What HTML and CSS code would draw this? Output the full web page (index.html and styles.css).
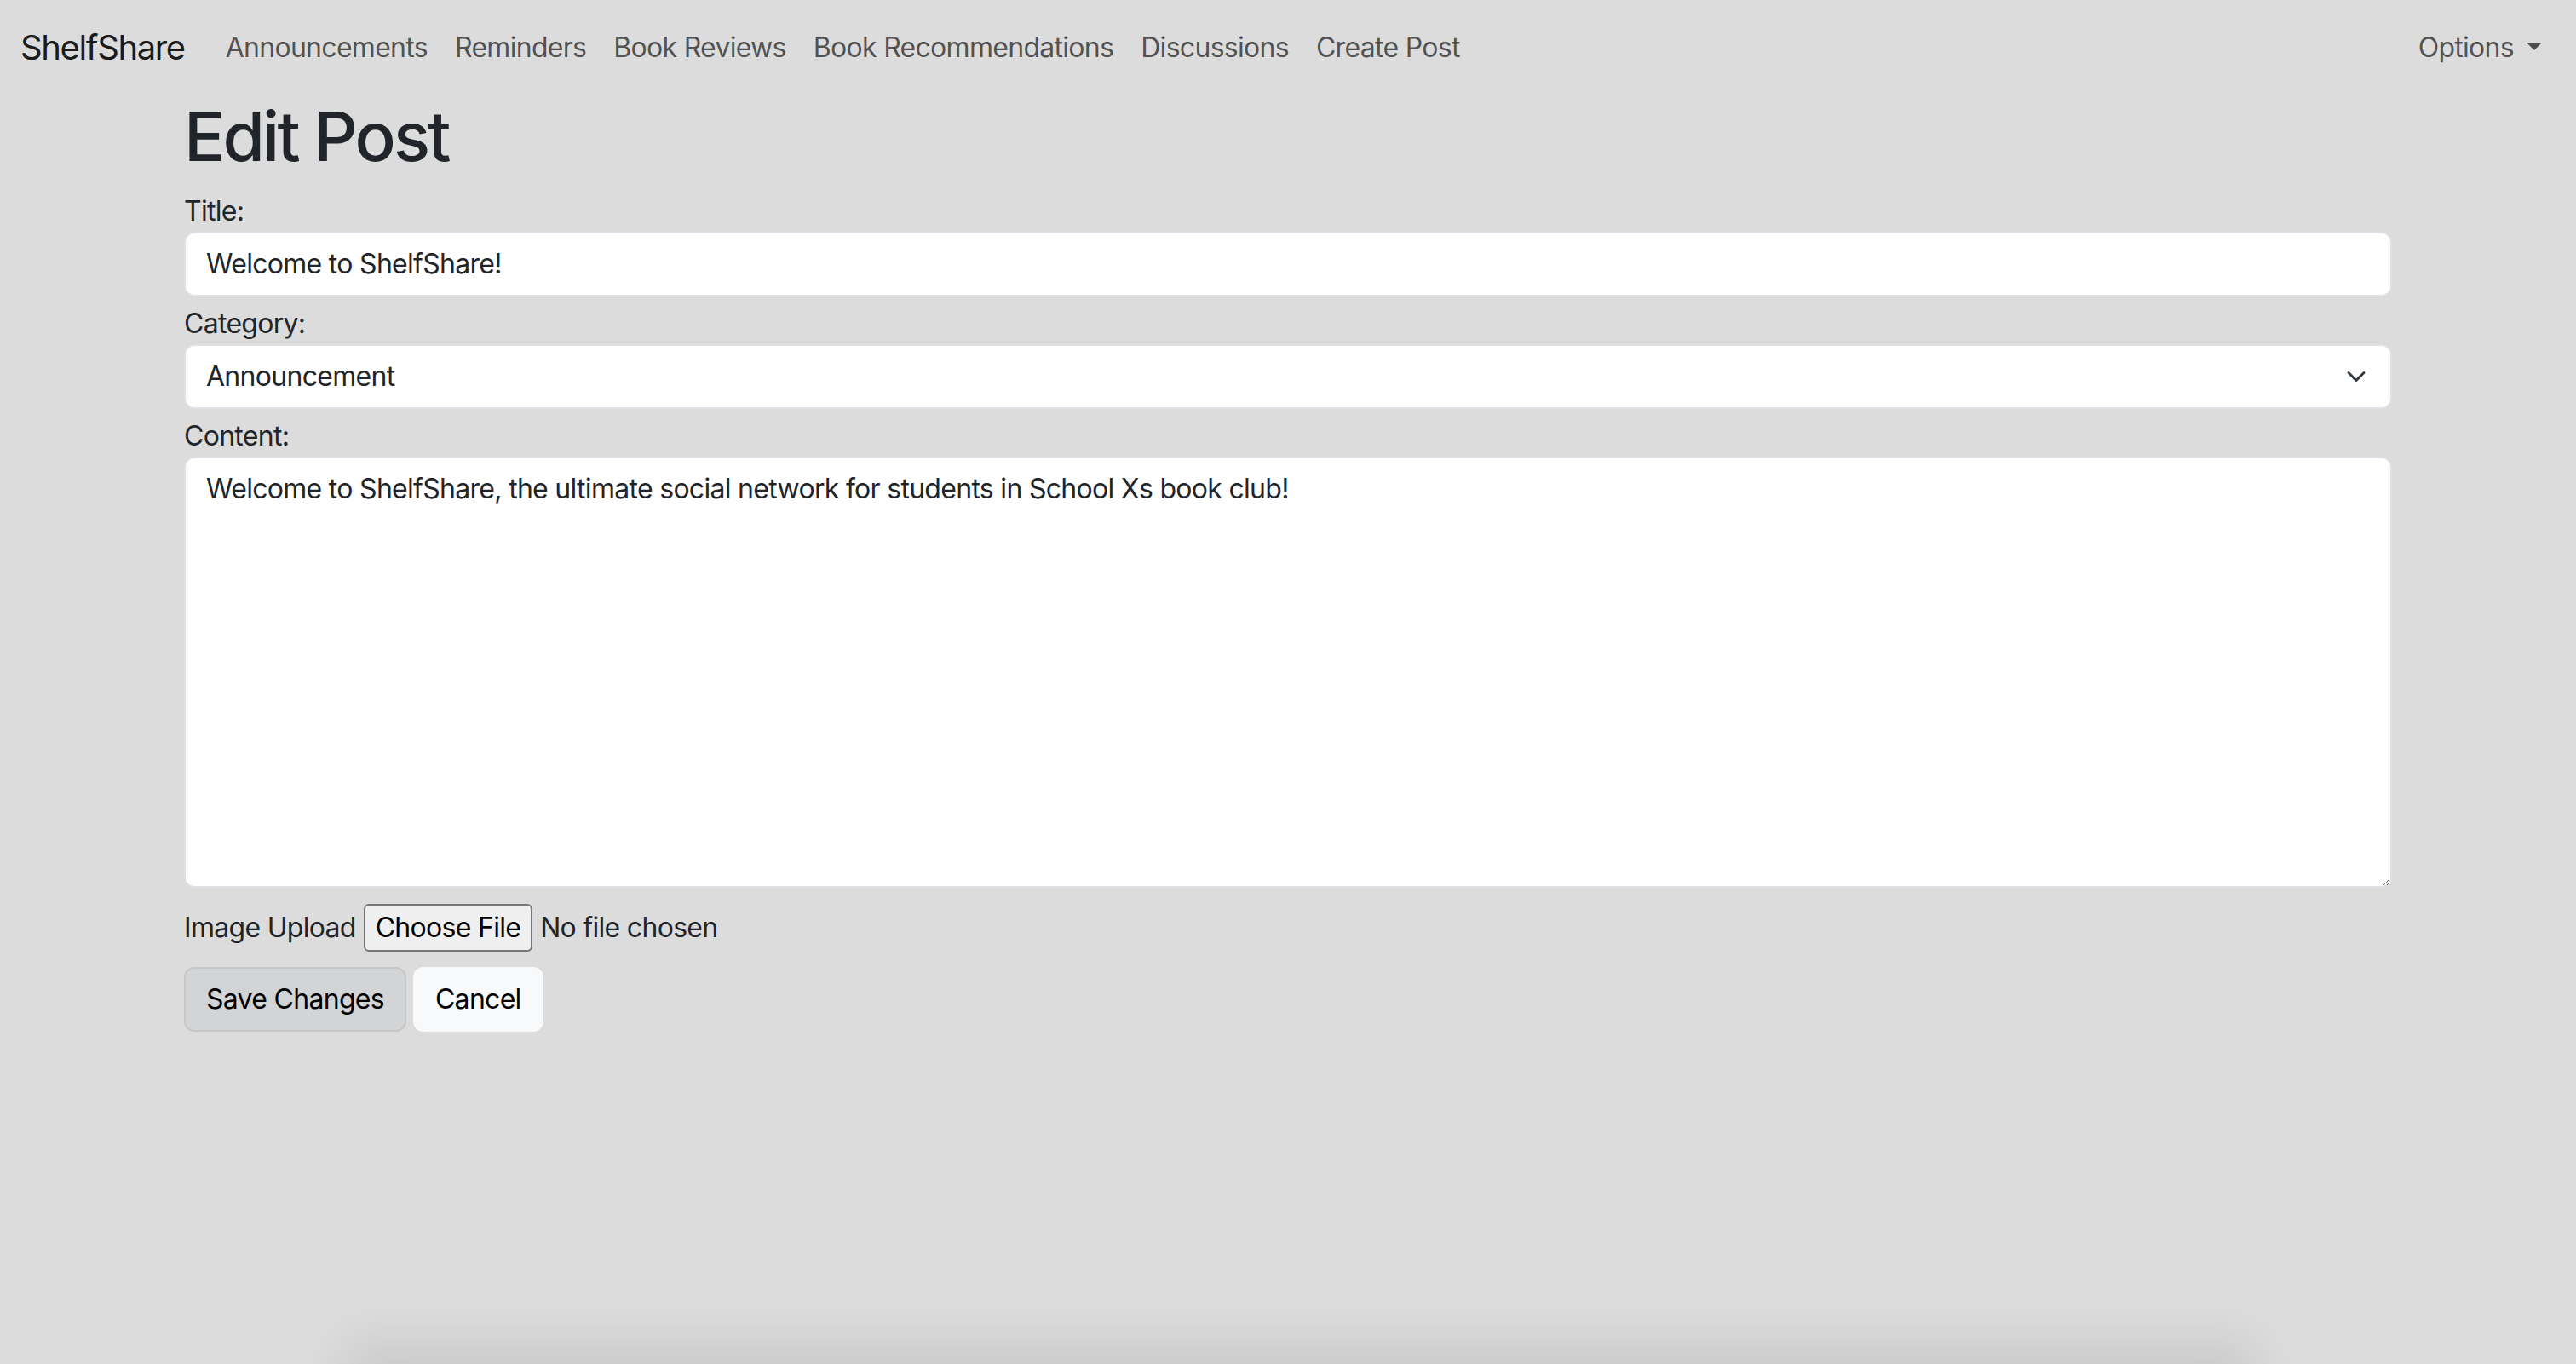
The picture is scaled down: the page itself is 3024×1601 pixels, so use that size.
FILE: index.html
```html
<!DOCTYPE html>
<html lang="en">
<head>
<meta charset="utf-8">
<title>Edit Post - ShelfShare</title>
<link rel="stylesheet" href="styles.css">
</head>
<body>
<nav class="navbar">
  <a class="brand" href="#">ShelfShare</a>
  <ul class="nav-links">
    <li><a class="nav-link" href="#">Announcements</a></li>
    <li><a class="nav-link" href="#">Reminders</a></li>
    <li><a class="nav-link" href="#">Book Reviews</a></li>
    <li><a class="nav-link" href="#">Book Recommendations</a></li>
    <li><a class="nav-link" href="#">Discussions</a></li>
    <li><a class="nav-link" href="#">Create Post</a></li>
  </ul>
  <div class="nav-right">
    <a class="nav-link dropdown-toggle" href="#">Options</a>
  </div>
</nav>

<main class="container">
  <h1 class="page-title">Edit Post</h1>
  <form class="post-form">
    <div class="group">
      <label class="label" for="title">Title:</label>
      <input class="form-control" id="title" type="text" value="Welcome to ShelfShare!">
    </div>
    <div class="group">
      <label class="label" for="category">Category:</label>
      <div class="select-wrap">
        <select class="form-control form-select" id="category">
          <option>Announcement</option>
          <option>Reminder</option>
          <option>Book Review</option>
          <option>Book Recommendation</option>
          <option>Discussion</option>
        </select>
        <svg class="chevron" viewBox="0 0 16 16" width="24" height="24" aria-hidden="true"><path d="m2 5 6 6 6-6" fill="none" stroke="#343a40" stroke-width="2" stroke-linecap="round" stroke-linejoin="round"/></svg>
      </div>
    </div>
    <div class="group group-text">
      <label class="label" for="content">Content:</label>
      <textarea class="form-control textarea" id="content" rows="10">Welcome to ShelfShare, the ultimate social network for students in School Xs book club!</textarea>
    </div>
    <div class="file-row">
      <label class="label-inline" for="image">Image Upload</label>
      <input class="file" id="image" type="file">
    </div>
    <div class="actions">
      <button class="btn btn-save" type="submit">Save Changes</button>
      <a class="btn btn-cancel" href="#">Cancel</a>
    </div>
  </form>
</main>
<div class="bottom-shadow"></div>
</body>
</html>
```
FILE: styles.css
```css
* { box-sizing: border-box; }

html, body {
  height: 100%;
}

body {
  margin: 0;
  background: #dcdcdc;
  color: #212529;
  font-family: "Inter", "Roboto", "Liberation Sans", sans-serif;
  font-size: 32px;
  line-height: 48px;
  letter-spacing: -0.022em;
  overflow: hidden;
}

a { text-decoration: none; color: inherit; }

.navbar {
  display: flex;
  align-items: center;
  padding: 16px 24px;
}

.brand {
  font-size: 40px;
  line-height: 60px;
  padding: 10px 0;
  margin-right: 32px;
  letter-spacing: -0.035em;
  color: rgba(0, 0, 0, 0.9);
}

.nav-links {
  display: flex;
  list-style: none;
  margin: 0;
  padding: 0;
}

.nav-link {
  display: block;
  padding: 16px 16px;
  color: rgba(0, 0, 0, 0.65);
  font-size: 32px;
  line-height: 48px;
}

.nav-right {
  margin-left: auto;
}

.dropdown-toggle::after {
  content: "";
  display: inline-block;
  margin-left: 15px;
  vertical-align: 8px;
  border-top: 9.6px solid;
  border-right: 9.6px solid transparent;
  border-left: 9.6px solid transparent;
  border-bottom: 0;
}

.container {
  max-width: 2640px;
  margin: 0 auto;
  padding: 0 24px;
}

.page-title {
  margin: 0 0 16px;
  font-size: 80px;
  line-height: 96px;
  font-weight: 500;
  letter-spacing: -0.035em;
  color: #212529;
}

.group {
  margin-bottom: 8px;
}

.group-text {
  margin-bottom: 19px;
}

.label {
  display: block;
  line-height: 48px;
}

.form-control {
  display: block;
  width: 100%;
  padding: 12px 24px;
  font-family: inherit;
  font-size: 32px;
  line-height: 48px;
  letter-spacing: inherit;
  color: #212529;
  background: #fff;
  border: 2px solid #dee2e6;
  border-radius: 12px;
  outline: none;
}

.select-wrap {
  position: relative;
}

.form-select {
  appearance: none;
  -webkit-appearance: none;
  padding-right: 80px;
}

.chevron {
  position: absolute;
  right: 30px;
  top: 50%;
  transform: translateY(-50%);
  pointer-events: none;
}

.textarea {
  height: 506px;
  resize: vertical;
}

.file-row {
  display: flex;
  align-items: center;
  gap: 9px;
  height: 56px;
  margin-bottom: 18px;
}

.label-inline {
  line-height: 48px;
}

.file {
  font-family: inherit;
  font-size: 32px;
  line-height: 48px;
  letter-spacing: inherit;
  color: #212529;
}

.file::file-selector-button {
  font-family: inherit;
  font-size: 32px;
  line-height: 48px;
  letter-spacing: inherit;
  padding: 2px 12px;
  margin-right: 9px;
  color: #000;
  background: #efefef;
  border: 2px solid #767676;
  border-radius: 6px;
}

.actions {
  display: flex;
  gap: 8px;
}

.btn {
  display: inline-block;
  padding: 12px 24px;
  font-family: inherit;
  font-size: 32px;
  line-height: 48px;
  letter-spacing: inherit;
  color: #000;
  border: 2px solid transparent;
  border-radius: 12px;
  cursor: pointer;
}

.btn-save {
  background: #d3d4d5;
  border-color: #c6c7c8;
}

.btn-cancel {
  background: #f8f9fa;
  border-color: #f8f9fa;
}

.bottom-shadow {
  position: fixed;
  left: 430px;
  right: 400px;
  bottom: -40px;
  height: 40px;
  box-shadow: 0 0 60px 24px rgba(0, 0, 0, 0.09);
  pointer-events: none;
}
```
